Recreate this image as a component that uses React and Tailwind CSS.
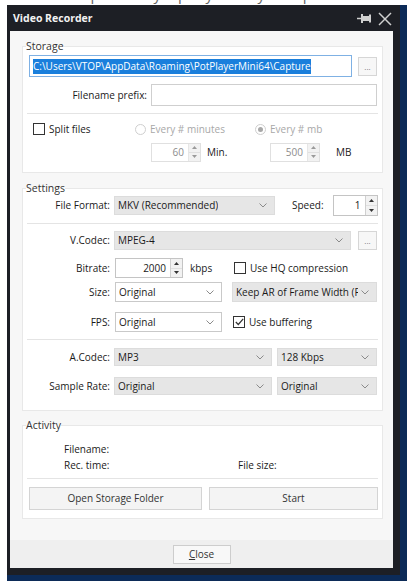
import React from 'react';

const font = { fontFamily: '"Open Sans", "Noto Sans", sans-serif' };

function Chevron() {
  return (
    <svg width="8" height="5" viewBox="0 0 8 5" className="shrink-0">
      <polyline points="0.5,0.5 4,4 7.5,0.5" fill="none" stroke="#8a8a8a" strokeWidth="1" />
    </svg>
  );
}

function Select({ value, width, white, height = 'h-[19px]' }) {
  return (
    <div
      className={`flex ${height} items-center justify-between gap-[3px] border pl-[3px] pr-[7px] ${
        white ? 'border-[#c9c9c9] bg-white' : 'border-[#dcdcdc] bg-[#e6e6e6]'
      }`}
      style={{ width }}
    >
      <span className="overflow-hidden whitespace-nowrap">{value}</span>
      <Chevron />
    </div>
  );
}

function Spinner({ value, width, disabled, height = 'h-[20px]' }) {
  return (
    <div
      className={`flex ${height} border bg-white ${disabled ? 'border-[#e0e0e0]' : 'border-[#c4c4c4]'}`}
      style={{ width }}
    >
      <div className={`flex flex-1 items-center justify-end pr-[4px] ${disabled ? 'text-[#8c8c8c]' : 'text-[#1a1a1a]'}`}>
        {value}
      </div>
      <div className={`flex w-[12px] flex-col border-l ${disabled ? 'border-[#e6e6e6]' : 'border-[#d0d0d0]'}`}>
        <div className="flex flex-1 items-center justify-center border-b border-[#e0e0e0] bg-[#f2f2f2]">
          <svg width="5" height="3" viewBox="0 0 5 3">
            <polygon points="2.5,0 5,3 0,3" fill={disabled ? '#9a9a9a' : '#333'} />
          </svg>
        </div>
        <div className="flex flex-1 items-center justify-center bg-[#f2f2f2]">
          <svg width="5" height="3" viewBox="0 0 5 3">
            <polygon points="0,0 5,0 2.5,3" fill={disabled ? '#9a9a9a' : '#333'} />
          </svg>
        </div>
      </div>
    </div>
  );
}

function Checkbox({ checked, label }) {
  return (
    <div className="flex items-center gap-[4px]">
      <div className="flex h-[12px] w-[12px] items-center justify-center border border-[#333] bg-white">
        {checked && (
          <svg width="9" height="8" viewBox="0 0 9 8">
            <polyline points="0.8,4 3.3,6.5 8.2,0.8" fill="none" stroke="#333" strokeWidth="1.2" />
          </svg>
        )}
      </div>
      <span>{label}</span>
    </div>
  );
}

function Radio({ checked, label }) {
  return (
    <div className="flex items-center gap-[4px] text-[#a8a8a8]">
      <div className="flex h-[11px] w-[11px] items-center justify-center rounded-full border border-[#cfcfcf] bg-white">
        {checked && <div className="h-[5px] w-[5px] rounded-full bg-[#a8a8a8]" />}
      </div>
      <span>{label}</span>
    </div>
  );
}

function DotsButton({ height = 'h-[19px]' }) {
  return (
    <div className={`flex ${height} w-[19px] items-end justify-center border border-[#d6d6d6] bg-[#f7f7f7] pb-[4px]`}>
      <span className="text-[8px] leading-none text-[#777]">...</span>
    </div>
  );
}

function Label({ children, width = 'w-[81px]' }) {
  return <div className={`${width} shrink-0 text-right`}>{children}</div>;
}

function Group({ title, className, children }) {
  return (
    <fieldset className={`mx-[10px] ml-[12px] border border-[#e8e8e8] bg-white ${className}`}>
      <legend className="ml-[3px] text-[10.5px] leading-[13px] text-[#333]">{title}</legend>
      {children}
    </fieldset>
  );
}

function Separator() {
  return <div className="mx-[4px] h-px bg-[#e4e4e4]" />;
}

export default function App() {
  return (
    <div className="h-[581px] w-[407px] overflow-hidden bg-white text-[10px] text-[#1a1a1a]" style={font}>
      {/* clipped text above the window */}
      <div className="h-[5px] overflow-hidden">
        <div className="-mt-[14px] pl-[40px] text-[15px] leading-[17px] text-[#666] whitespace-nowrap">
          the output of any input you may set up with the following settings
        </div>
      </div>

      <div className="flex h-[576px]">
        <div className="w-[7px] shrink-0 bg-white" />
        <div className="flex w-[393px] flex-col">
          {/* window */}
          <div className="flex h-[570px] flex-col bg-[#1d1f25]">
            <div className="flex h-[26px] shrink-0 items-center justify-between pl-[6px] pr-[8px] pt-[1px]">
              <span className="text-[10.5px] font-bold text-[#f2f2f2]">Video Recorder</span>
              <div className="flex items-center gap-[6px]">
                <svg width="15" height="11" viewBox="0 0 15 11">
                  <line x1="0" y1="5.5" x2="4" y2="5.5" stroke="#d0d0d0" strokeWidth="1.5" />
                  <rect x="4" y="1" width="2" height="9" fill="#d0d0d0" />
                  <rect x="6" y="3" width="6" height="5" fill="#d0d0d0" />
                  <rect x="12" y="1.5" width="2" height="8" fill="#d0d0d0" />
                </svg>
                <svg width="14" height="14" viewBox="0 0 14 14">
                  <line x1="1" y1="1" x2="13" y2="13" stroke="#d0d0d0" strokeWidth="1.5" />
                  <line x1="13" y1="1" x2="1" y2="13" stroke="#d0d0d0" strokeWidth="1.5" />
                </svg>
              </div>
            </div>

            {/* body */}
            <div className="ml-[3px] mr-[7px] flex h-[537px] flex-col bg-[#f7f7f7]">
              {/* Storage */}
              <Group title="Storage" className="mt-[9px] pb-[10px]">
                <div className="mt-[2px] flex items-center pl-[6px] pr-[5px]">
                  <div className="flex h-[22px] w-[323px] items-center border border-[#7fb1e4] bg-white pl-[3px]">
                    <span className="bg-[#1a7fdc] leading-[15px] text-white whitespace-nowrap">
                      C:\Users\VTOP\AppData\Roaming\PotPlayerMini64\Capture
                    </span>
                  </div>
                  <div className="ml-[6px]">
                    <DotsButton />
                  </div>
                </div>
                <div className="mt-[7px] flex items-center pl-[6px] pr-[5px]">
                  <Label width="w-[118px]">Filename prefix:</Label>
                  <div className="ml-[4px] h-[22px] flex-1 border border-[#cfcfcf] bg-white" />
                </div>
                <div className="mt-[7px]">
                  <Separator />
                </div>
                <div className="mt-[8px] flex h-[14px] items-center">
                  <div className="ml-[10px] w-[102px]">
                    <Checkbox label="Split files" />
                  </div>
                  <div className="w-[120px]">
                    <Radio label="Every # minutes" />
                  </div>
                  <Radio checked label="Every # mb" />
                </div>
                <div className="mt-[6px] flex h-[20px] items-center">
                  <div className="ml-[128px] flex w-[119px] items-center">
                    <Spinner value="60" width="50px" disabled height="h-[19px]" />
                    <span className="ml-[6px]">Min.</span>
                  </div>
                  <Spinner value="500" width="50px" disabled height="h-[19px]" />
                  <span className="ml-[16px]">MB</span>
                </div>
              </Group>

              {/* Settings */}
              <Group title="Settings" className="mt-[9px] pb-[15px]">
                <div className="flex h-[21px] items-center pl-[6px]">
                  <Label>File Format:</Label>
                  <div className="ml-[4px]">
                    <Select value="MKV (Recommended)" width="161px" />
                  </div>
                  <span className="ml-[17px]">Speed:</span>
                  <div className="ml-[9px]">
                    <Spinner value="1" width="45px" height="h-[21px]" />
                  </div>
                </div>
                <div className="mt-[7px]">
                  <Separator />
                </div>
                <div className="mt-[7px] flex h-[19px] items-center pl-[6px]">
                  <Label>V.Codec:</Label>
                  <div className="ml-[4px]">
                    <Select value="MPEG-4" width="237px" />
                  </div>
                  <div className="ml-[7px]">
                    <DotsButton />
                  </div>
                </div>
                <div className="mt-[8px] flex h-[20px] items-center pl-[6px]">
                  <Label>Bitrate:</Label>
                  <div className="ml-[5px]">
                    <Spinner value="2000" width="68px" />
                  </div>
                  <span className="ml-[7px] w-[44px]">kbps</span>
                  <Checkbox label="Use HQ compression" />
                </div>
                <div className="mt-[4px] flex h-[20px] items-center pl-[6px]">
                  <Label>Size:</Label>
                  <div className="ml-[5px]">
                    <Select value="Original" width="107px" white height="h-[20px]" />
                  </div>
                  <div className="ml-[10px]">
                    <Select value="Keep AR of Frame Width (F" width="145px" height="h-[20px]" />
                  </div>
                </div>
                <div className="mt-[10px] flex h-[20px] items-center pl-[6px]">
                  <Label>FPS:</Label>
                  <div className="ml-[5px]">
                    <Select value="Original" width="107px" white height="h-[20px]" />
                  </div>
                  <div className="ml-[11px]">
                    <Checkbox checked label="Use buffering" />
                  </div>
                </div>
                <div className="mt-[7px]">
                  <Separator />
                </div>
                <div className="mt-[8px] flex h-[18px] items-center pl-[6px]">
                  <Label>A.Codec:</Label>
                  <div className="ml-[4px]">
                    <Select value="MP3" width="158px" height="h-[18px]" />
                  </div>
                  <div className="ml-[5px]">
                    <Select value="128 Kbps" width="100px" height="h-[18px]" />
                  </div>
                </div>
                <div className="mt-[11px] flex h-[18px] items-center pl-[6px]">
                  <Label>Sample Rate:</Label>
                  <div className="ml-[4px]">
                    <Select value="Original" width="158px" height="h-[18px]" />
                  </div>
                  <div className="ml-[5px]">
                    <Select value="Original" width="100px" height="h-[18px]" />
                  </div>
                </div>
              </Group>

              {/* Activity */}
              <Group title="Activity" className="mt-[8px] pb-[8px]">
                <div className="mt-[10px] flex h-[14px] items-center pl-[41px]">Filename:</div>
                <div className="mt-[2px] flex h-[14px] items-center pl-[41px]">
                  <span className="w-[174px]">Rec. time:</span>
                  <span>File size:</span>
                </div>
                <div className="mt-[6px]">
                  <Separator />
                </div>
                <div className="mt-[8px] flex pl-[6px]">
                  <div className="flex h-[23px] w-[173px] items-center justify-center border border-[#d4d4d4] bg-[#f4f4f4] text-[#333]">
                    Open Storage Folder
                  </div>
                  <div className="ml-[7px] flex h-[23px] w-[169px] items-center justify-center border border-[#d4d4d4] bg-[#f4f4f4] text-[#333]">
                    Start
                  </div>
                </div>
              </Group>

              <div className="flex-1" />

              {/* footer */}
              <div className="flex h-[28px] shrink-0 items-center justify-center bg-[#efefef]">
                <div className="flex h-[19px] w-[58px] items-center justify-center border border-[#cdcdcd] bg-[#f8f8f8] text-[#333]">
                  <span>
                    <span className="underline">C</span>lose
                  </span>
                </div>
              </div>
            </div>
            <div className="flex-1" />
          </div>
          <div className="flex-1 bg-[#0c2b58]" />
        </div>
        <div className="w-[7px] shrink-0 bg-[#0c2b58]" />
      </div>
    </div>
  );
}
